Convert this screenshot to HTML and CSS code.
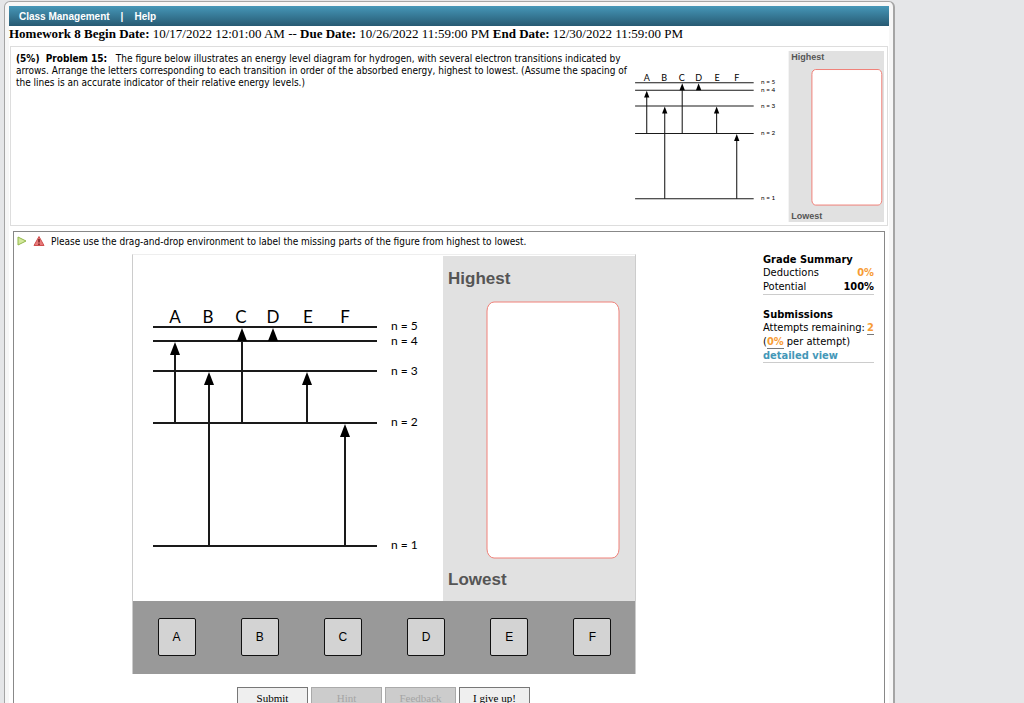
FILE: index.html
```
<!DOCTYPE html>
<html lang="en">

<head>
    <meta charset="UTF-8">
    <meta name="viewport" content="width=device-width, initial-scale=1.0">
    <title>Homework 8</title>
    <link rel="stylesheet" href="styles.css">
</head>

<body>
    <!-- energy diagram, shared by the thumbnail and the drag-and-drop area -->
    <svg class="defs" width="0" height="0" aria-hidden="true">
        <defs>
            <path id="head" d="M0 0 L5 13 H-5 Z" />
            <g id="diagram">
                <rect class="panel" x="310" y="1" width="192" height="345" />
                <rect class="drop-zone" x="354" y="47" width="132" height="256" rx="7" ry="9" />
                <g class="levels">
                    <path d="M20 72H244M20 86H244M20 116H244M20 168H244M20 291H244" />
                    <path d="M42 168V96M76 291V126M109 168V82M174 168V126M212 291V178" />
                </g>
                <use href="#head" x="42" y="87" />
                <use href="#head" x="76" y="117" />
                <use href="#head" x="109" y="73" />
                <use href="#head" x="140" y="73" />
                <use href="#head" x="174" y="117" />
                <use href="#head" x="212" y="169" />
                <g class="letters">
                    <text x="42" y="68">A</text>
                    <text x="75" y="68">B</text>
                    <text x="108" y="68">C</text>
                    <text x="140" y="68">D</text>
                    <text x="175" y="68">E</text>
                    <text x="212" y="68">F</text>
                </g>
                <g class="numbers">
                    <text x="258" y="75">n = 5</text>
                    <text x="258" y="90">n = 4</text>
                    <text x="258" y="120">n = 3</text>
                    <text x="258" y="171">n = 2</text>
                    <text x="258" y="294">n = 1</text>
                </g>
                <g class="ends">
                    <text x="315" y="29">Highest</text>
                    <text x="315" y="330">Lowest</text>
                </g>
            </g>
        </defs>
    </svg>

    <div class="wrapper">
        <nav class="menu">
            <a href="#">Class Management</a>
            <span>|</span>
            <a href="#">Help</a>
        </nav>

        <div class="dates">
            <b>Homework 8</b> <b>Begin Date:</b> 10/17/2022 12:01:00 AM -- <b>Due Date:</b> 10/26/2022 11:59:00 PM <b>End Date:</b> 12/30/2022 11:59:00 PM
        </div>

        <div class="problem">
            <p><b>(5%)&nbsp; Problem 15:</b> &nbsp; The figure below illustrates an energy level diagram for hydrogen, with several electron transitions indicated by<br>
                arrows. Arrange the letters corresponding to each transition in order of the absorbed energy, highest to lowest. (Assume the spacing of<br>
                the lines is an accurate indicator of their relative energy levels.)</p>
            <svg class="thumb" viewBox="20 12 470 323">
                <use href="#diagram" />
            </svg>
        </div>

        <div class="question">
            <div class="instruction">
                <svg width="10" height="10" viewBox="0 0 10 10">
                    <path d="M1 1 L9 5 L1 9 Z" fill="#d3e89c" stroke="#93b84c" stroke-linejoin="round" />
                </svg>
                <svg width="12" height="12" viewBox="0 0 12 12">
                    <path d="M6 1.5 L11 10.5 H1 Z" fill="#e87a7a" stroke="#cf5050" stroke-linejoin="round" />
                    <path d="M6 4 V7.5 M6 8.5 V10" stroke="#7a2020" stroke-width="1.5" />
                </svg>
                <span>Please use the drag-and-drop environment to label the missing parts of the figure from highest to lowest.</span>
            </div>

            <div class="columns">
                <form class="work">
                    <div class="environment">
                        <svg class="figure" viewBox="0 0 502 346">
                            <use href="#diagram" />
                        </svg>
                        <div class="tiles">
                            <button type="button">A</button>
                            <button type="button">B</button>
                            <button type="button">C</button>
                            <button type="button">D</button>
                            <button type="button">E</button>
                            <button type="button">F</button>
                        </div>
                    </div>
                    <div class="actions">
                        <button type="submit">Submit</button>
                        <button type="button" disabled>Hint</button>
                        <button type="button" disabled>Feedback</button>
                        <button type="button">I give up!</button>
                    </div>
                </form>

                <aside class="summary">
                    <section>
                        <h2>Grade Summary</h2>
                        <div class="row"><span>Deductions</span><b class="orange">0%</b></div>
                        <div class="row"><span>Potential</span><b>100%</b></div>
                    </section>
                    <section>
                        <h2>Submissions</h2>
                        <div class="row"><span>Attempts remaining:</span><b class="orange under">2</b></div>
                        <div>(<b class="orange under">0%</b> per attempt)</div>
                        <a href="#">detailed view</a>
                    </section>
                </aside>
            </div>
        </div>
    </div>
</body>

</html>
```
FILE: styles.css
```
* {
    box-sizing: border-box;
}

body {
    margin: 0;
    padding: 1px 4px 0;
    background-color: #e5e6e8;
    font-family: "DejaVu Sans Condensed", "DejaVu Sans", sans-serif;
    font-size: 10px;
    color: #000;
}

.defs {
    position: absolute;
}

.wrapper {
    width: 87.6%;
    min-width: 891px;
    border: 1px solid #a5a5a5;
    border-right-width: 2px;
    border-radius: 6px;
    padding: 4px;
    background-color: #fff;
    box-shadow: inset 0 0 0 4px #f7f7f7;
}

.menu {
    display: flex;
    gap: 11px;
    height: 20px;
    padding: 0 10px;
    align-items: center;
    background-image: linear-gradient(#4697b8, #275a72);
    color: #fff;
    font-family: "Liberation Sans", Arial, sans-serif;
    font-size: 10px;
    font-weight: bold;
}

.menu a {
    color: #fff;
    text-decoration: none;
}

.dates {
    font-family: "Liberation Serif", "Times New Roman", serif;
    font-size: 13px;
    line-height: 16px;
    height: 20px;
}

.problem {
    display: flex;
    justify-content: space-between;
    margin: 0 1px;
    padding: 4px 3px 3px 5px;
    border: 1px solid #ddd;
}

.problem p {
    margin: 2px 0 0;
    line-height: 12px;
}

.thumb {
    flex-shrink: 0;
    width: 249px;
    height: 171px;
}

.question {
    margin: 5px 4px 0;
    padding-bottom: 30px;
    border: 1px solid #888;
}

.instruction {
    display: flex;
    gap: 6px;
    height: 18px;
    padding-left: 3px;
    align-items: center;
}

.columns {
    display: flex;
    gap: 10px;
    padding: 4px 10px 0 0;
}

.work {
    display: flex;
    flex: 1;
    flex-direction: column;
    align-items: center;
}

.environment {
    width: 504px;
    border: 1px solid #ccc;
    border-top-color: #eee;
    border-bottom: 0;
}

.figure {
    display: block;
    width: 100%;
}

.panel {
    fill: #e1e1e1;
}

.drop-zone {
    fill: #fff;
    stroke: #f08078;
    vector-effect: non-scaling-stroke;
}

.levels {
    fill: none;
    stroke: #1a1a1a;
    stroke-width: 2px;
}

.letters {
    font-family: Lato, sans-serif;
    font-size: 17px;
    text-anchor: middle;
}

.numbers {
    font-family: Lato, sans-serif;
    font-size: 12px;
}

.ends {
    fill: #555;
    font-family: "Liberation Sans", Arial, sans-serif;
    font-size: 17px;
    font-weight: bold;
}

.tiles {
    display: flex;
    justify-content: space-between;
    padding: 17px 23px 18px 25px;
    background-color: #999;
}

.tiles button {
    width: 38px;
    height: 38px;
    padding: 0;
    border: 1px solid #111;
    border-radius: 2px;
    background-color: #d3d3d3;
    font-family: "Liberation Sans", Arial, sans-serif;
    font-size: 12px;
    color: #000;
}

.actions {
    display: flex;
    gap: 3px;
    margin-top: 13px;
}

.actions button {
    width: 71px;
    height: 21px;
    padding: 0;
    border: 1px solid #777;
    background-color: #efefef;
    font-family: "Liberation Serif", "Times New Roman", serif;
    font-size: 11px;
    color: #000;
}

.actions button:disabled {
    border-color: #aaa;
    background-color: #ccc;
    color: #a5a5a5;
}

.summary {
    width: 111px;
    margin-top: -1px;
    font-size: 11px;
    line-height: 14px;
}

.summary section {
    margin-bottom: 13px;
    border-bottom: 1px solid #ccc;
}

.summary h2 {
    margin: 0;
    font-size: 11px;
    line-height: 13px;
}

.summary a {
    display: block;
    line-height: 13px;
    color: #4497b8;
    font-weight: bold;
    text-decoration: none;
}

.row {
    display: flex;
    justify-content: space-between;
    height: 14px;
    white-space: nowrap;
}

.orange {
    color: #f79c34;
}

.under {
    border-bottom: 1px solid #777;
}
```
